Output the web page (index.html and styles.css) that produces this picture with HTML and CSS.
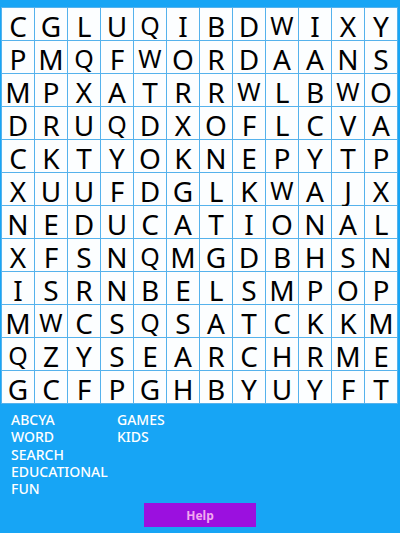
FILE: index.html
```html
<!DOCTYPE html>
<html>
<head>
<meta charset="utf-8">
<link rel="stylesheet" href="styles.css">
</head>
<body>
<div class="board">
<span>C</span><span>G</span><span>L</span><span>U</span><span class="sm">Q</span><span>I</span><span>B</span><span>D</span><span class="sm">W</span><span>I</span><span>X</span><span>Y</span>
<span>P</span><span>M</span><span class="sm">Q</span><span>F</span><span class="sm">W</span><span>O</span><span>R</span><span>D</span><span>A</span><span>A</span><span>N</span><span>S</span>
<span>M</span><span>P</span><span>X</span><span>A</span><span>T</span><span>R</span><span>R</span><span class="sm">W</span><span>L</span><span>B</span><span class="sm">W</span><span>O</span>
<span>D</span><span>R</span><span>U</span><span class="sm">Q</span><span>D</span><span>X</span><span>O</span><span>F</span><span>L</span><span>C</span><span>V</span><span>A</span>
<span>C</span><span>K</span><span>T</span><span>Y</span><span>O</span><span>K</span><span>N</span><span>E</span><span>P</span><span>Y</span><span>T</span><span>P</span>
<span>X</span><span>U</span><span>U</span><span>F</span><span>D</span><span>G</span><span>L</span><span>K</span><span class="sm">W</span><span>A</span><span>J</span><span>X</span>
<span>N</span><span>E</span><span>D</span><span>U</span><span>C</span><span>A</span><span>T</span><span>I</span><span>O</span><span>N</span><span>A</span><span>L</span>
<span>X</span><span>F</span><span>S</span><span>N</span><span class="sm">Q</span><span>M</span><span>G</span><span>D</span><span>B</span><span>H</span><span>S</span><span>N</span>
<span>I</span><span>S</span><span>R</span><span>N</span><span>B</span><span>E</span><span>L</span><span>S</span><span>M</span><span>P</span><span>O</span><span>P</span>
<span>M</span><span class="sm">W</span><span>C</span><span>S</span><span class="sm">Q</span><span>S</span><span>A</span><span>T</span><span>C</span><span>K</span><span>K</span><span>M</span>
<span class="sm">Q</span><span>Z</span><span>Y</span><span>S</span><span>E</span><span>A</span><span>R</span><span>C</span><span>H</span><span>R</span><span>M</span><span>E</span>
<span>G</span><span>C</span><span>F</span><span>P</span><span>G</span><span>H</span><span>B</span><span>Y</span><span>U</span><span>Y</span><span>F</span><span>T</span>
</div>
<div class="words">
  <ul class="col first">
    <li>ABCYA</li>
    <li>WORD</li>
    <li>SEARCH</li>
    <li>EDUCATIONAL</li>
    <li>FUN</li>
  </ul>
  <ul class="col">
    <li>GAMES</li>
    <li>KIDS</li>
  </ul>
</div>
<div class="actions">
  <button class="help">Help</button>
</div>
</body>
</html>
```
FILE: styles.css
```css
html, body {
  margin: 0;
  padding: 0;
}
body {
  background: #17a5f5;
  width: 400px;
  height: 533px;
  overflow: hidden;
  font-family: "Noto Sans", "Open Sans", sans-serif;
}
.board {
  margin: 7px 0 0 1px;
  display: grid;
  grid-template-columns: repeat(12, 32px);
  grid-auto-rows: 32px;
  gap: 1px;
  padding: 1px;
  background: #55b2ec;
  width: max-content;
}
.board span {
  background: #fcfeff;
  color: #000;
  font-size: 28px;
  line-height: 28px;
  display: flex;
  align-items: center;
  justify-content: center;
  padding-top: 4px;
  box-sizing: border-box;
}
.board span.sm {
  font-size: 25px;
  padding-top: 1px;
}
.words {
  display: flex;
  padding: 7px 0 0 11px;
}
.col {
  list-style: none;
  margin: 0;
  padding: 0;
  color: #fff;
  font-size: 14px;
  line-height: 17.3px;
  font-weight: 500;
}
.col.first {
  width: 106px;
}
.actions {
  display: flex;
  justify-content: center;
  margin-top: 6px;
}
.help {
  width: 112px;
  height: 24px;
  border: 0;
  padding: 0;
  background: #9b10df;
  color: #f3a9f0;
  font-family: "Noto Sans", "Open Sans", sans-serif;
  font-size: 12px;
  font-weight: 700;
}
```
